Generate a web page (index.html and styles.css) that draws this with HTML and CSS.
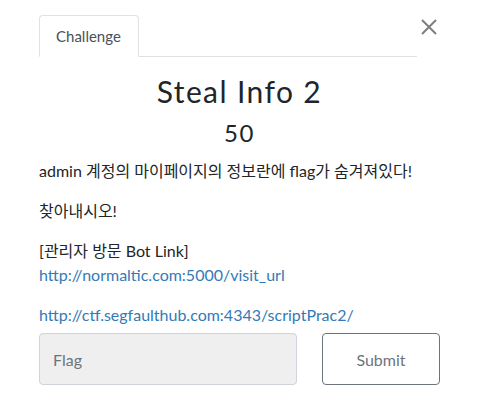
FILE: index.html
```html
<!DOCTYPE html>
<html lang="ko">
<head>
<meta charset="utf-8">
<link rel="stylesheet" href="styles.css">
</head>
<body>
<div class="modal">
  <div class="head">
    <ul class="tabs">
      <li class="tab">Challenge</li>
    </ul>
    <button class="close" aria-label="Close">
      <svg width="16" height="16" viewBox="0 0 16 16"><path d="M1 1L15 15M15 1L1 15" stroke="#7f7f7f" stroke-width="2" fill="none"/></svg>
    </button>
  </div>
  <h2 class="title">Steal Info 2</h2>
  <h3 class="value">50</h3>
  <div class="desc">
    <p>admin 계정의 마이페이지의 정보란에 flag가 숨겨져있다!</p>
    <p>찾아내시오!</p>
    <p>[관리자 방문 Bot Link]<br><a href="#">http://normaltic.com:5000/visit_url</a></p>
    <p><a href="#">http://ctf.segfaulthub.com:4343/scriptPrac2/</a></p>
  </div>
  <form class="submit-row">
    <input class="flag" type="text" placeholder="Flag">
    <button class="submit" type="button">Submit</button>
  </form>
</div>
</body>
</html>
```

FILE: styles.css
```css
* { box-sizing: border-box; }
body {
  margin: 0;
  background: #fff;
  font-family: Lato, "Noto Sans CJK KR", sans-serif;
  color: #212529;
}
.modal {
  padding: 15px 39px 0 39px;
}
.head {
  display: flex;
  align-items: flex-start;
}
.tabs {
  list-style: none;
  margin: 0;
  padding: 0;
  width: 378px;
  border-bottom: 1px solid #dee2e6;
  display: flex;
}
.tab {
  height: 42px;
  margin-bottom: -1px;
  padding: 0 17px 0 16px;
  line-height: 40px;
  font-size: 15px;
  color: #495057;
  border: 1px solid #dee2e6;
  border-bottom-color: #fff;
  border-radius: 4px 4px 0 0;
  background: #fff;
}
.close {
  margin: 4px 0 0 4px;
  padding: 0;
  border: 0;
  background: none;
  width: 16px;
  height: 16px;
  display: block;
}
.close svg { display: block; }
.title {
  margin: 16px 0 0;
  text-align: center;
  font-weight: 400;
  font-size: 30px;
  letter-spacing: 1.4px;
  line-height: 36px;
  color: #212529;
}
.value {
  margin: 8px 0 0;
  text-align: center;
  font-weight: 400;
  font-size: 24px;
  letter-spacing: 1.5px;
  line-height: 32px;
  color: #212529;
}
.desc {
  margin-top: 10px;
  font-size: 16px;
  line-height: 24px;
}
.desc p { margin: 0 0 16px; }
.desc a { color: #337ab7; text-decoration: none; }
.submit-row {
  display: flex;
  gap: 25px;
  margin-top: -10px;
}
.flag {
  width: 258px;
  height: 52px;
  padding: 0 13px;
  border: 1px solid #ced4da;
  border-radius: 4px;
  background: #efefef;
  font-family: Lato, sans-serif;
  font-size: 16px;
  color: #495057;
}
.flag::placeholder { color: #6c757d; }
.submit {
  width: 118px;
  height: 52px;
  border: 1px solid #6c757d;
  border-radius: 4px;
  background: #fff;
  font-family: Lato, sans-serif;
  font-size: 16px;
  color: #6c757d;
}
```
